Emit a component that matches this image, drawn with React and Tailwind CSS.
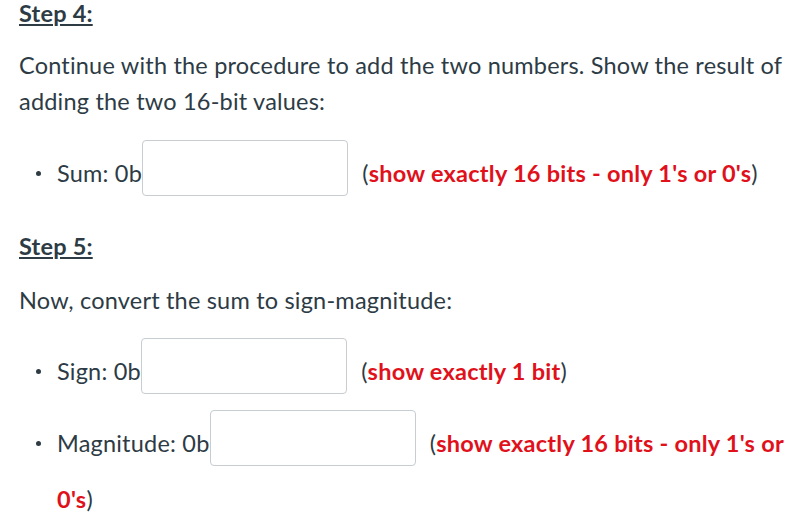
export default function App() {
  const Box = () => (
    <span className="inline-block box-border h-[56px] w-[206px] align-baseline rounded-[4px] border border-[#c7cdd1] bg-white pt-[19px] leading-[26px] mb-[15px]">
      {"\u00a0"}
    </span>
  );
  const Red = ({ children }) => (
    <span className="font-bold tracking-[0.25px] text-[#e0111b]">{children}</span>
  );
  const Dot = () => (
    <span className="inline-block h-[5px] w-[5px] rounded-full bg-[#2d3b45] -ml-[21px] mr-[16px] align-[6px]" />
  );
  return (
    <div
      className="min-h-[531px] bg-white pl-[19px] pr-[8px] text-[23.5px] leading-[36px] tracking-[0.2px] text-[#2d3b45]"
      style={{ fontFamily: "Lato, 'Liberation Sans', sans-serif" }}
    >
      <p className="font-bold underline leading-[26px] underline-offset-[2px] decoration-[2px]">Step 4:</p>
      <p className="mt-[21px]">
        Continue with the procedure to add the two numbers. Show the result of adding the two 16-bit values:
      </p>
      <ul className="mt-[21px] list-none pl-[38px]">
        <li>
          <Dot />Sum: 0b<Box /> <span className="ml-[8px]">(<Red>show exactly 16 bits - only 1's or 0's</Red>)</span>
        </li>
      </ul>
      <p className="mt-[22px] font-bold underline leading-[26px] underline-offset-[2px] decoration-[2px]">Step 5:</p>
      <p className="mt-[23px]">Now, convert the sum to sign-magnitude:</p>
      <ul className="mt-[20px] list-none pl-[38px]">
        <li>
          <Dot />Sign: 0b<Box /> <span className="ml-[8px]">(<Red>show exactly 1 bit</Red>)</span>
        </li>
        <li className="mt-[1px]">
          <Dot />Magnitude: 0b<Box /> <span className="ml-[8px]">(<Red>show exactly 16 bits - only 1's or 0's</Red>)</span>
        </li>
      </ul>
    </div>
  );
}
